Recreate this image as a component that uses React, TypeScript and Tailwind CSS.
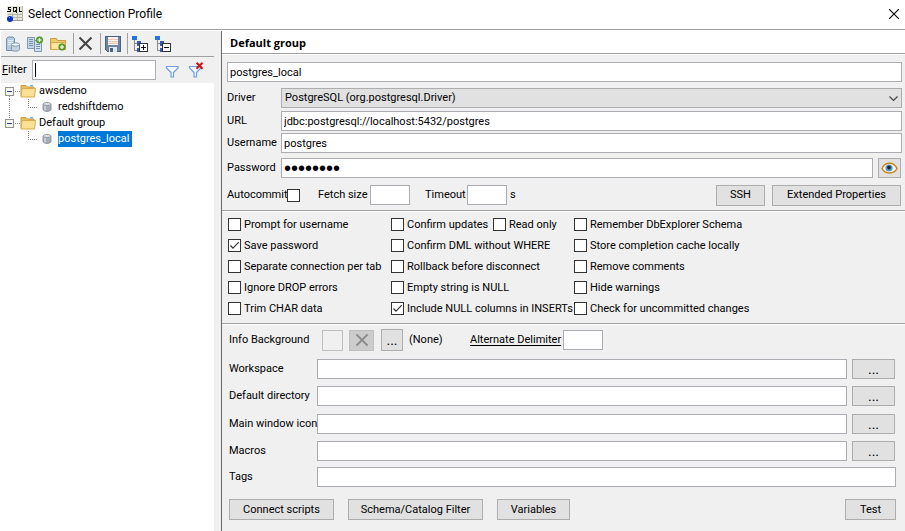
import { useId, type ReactNode } from "react";

const field = "h-5 min-w-0 border border-[#abadb3] bg-white px-0.5 outline-none";
const button = "flex items-center justify-center border border-[#adadad] bg-[#e1e1e1]";

function Check({ label, checked = false }: { label: string; checked?: boolean }) {
  return (
    <label className="flex h-[21px] items-center gap-[3px] whitespace-nowrap">
      <span className="relative h-[13px] w-[13px] shrink-0">
        <input
          type="checkbox"
          defaultChecked={checked}
          className="peer block h-[13px] w-[13px] appearance-none border border-[#333] bg-white"
        />
        <svg viewBox="0 0 13 13" className="pointer-events-none absolute inset-0 hidden h-[13px] w-[13px] peer-checked:block">
          <path d="M2.5 6.5 5 9.2 10.8 3.2" fill="none" stroke="#333" strokeWidth="1.2" />
        </svg>
      </span>
      {label}
    </label>
  );
}

function TopRow({ label, className, children }: { label: string; className: string; children: (id: string) => ReactNode }) {
  const id = useId();
  return (
    <div className={`flex items-center ${className}`}>
      <label htmlFor={id} className="w-[54px] shrink-0">{label}</label>
      {children(id)}
    </div>
  );
}

function PathRow({ label, className, browse = true }: { label: string; className: string; browse?: boolean }) {
  const id = useId();
  return (
    <div className={`flex h-5 items-center ${className}`}>
      <label htmlFor={id} className="w-[88px] shrink-0 whitespace-nowrap">{label}</label>
      <input id={id} type="text" className={`${field} flex-1`} />
      {browse && (
        <button type="button" aria-label={`Browse ${label}`} className={`${button} ml-[5px] mr-px h-5 w-[43px]`}>
          <Dots />
        </button>
      )}
    </div>
  );
}

function Dots() {
  return <span className="text-sm leading-3">...</span>;
}

function Rule() {
  return <div className="h-0.5 border-t border-[#a0a0a0] bg-white" />;
}

function AppIcon() {
  return (
    <svg width="16" height="16" viewBox="0 0 16 16" shapeRendering="crispEdges">
      <path d="M0 0h16v15H0z" fill="#e6e6dc" />
      <path d="M1 8.5h14M1 11.5h14M5.5 7v8M10.5 7v8M15.5 0v15" stroke="#b4b4a8" />
      <path d="M1 14.5h15" stroke="#999" />
      <path d="M4 1.5H1.500v2H3.500v2H0M6.500 1.500h3v4h-3zM8.500 4.500l2 3M12.500 1v4.500H15" fill="none" stroke="#111" />
      <circle cx="3" cy="13" r="3" fill="#0a32c8" shapeRendering="auto" />
      <path d="M2 11h1v1H2z" fill="#7da0ff" />
    </svg>
  );
}

function Cylinder() {
  return (
    <>
      <path d="M6.500 8.500v5c0 2.300 8 2.300 8 0v-5" fill="#c5d3df" stroke="#8299ae" />
      <ellipse cx="10.500" cy="8.500" rx="4" ry="1.700" fill="#edf3f8" stroke="#8299ae" />
    </>
  );
}

function ServerIcon() {
  return (
    <svg width="16" height="16" viewBox="0 0 16 16">
      <path d="M1.500 2.500 3 1h5l1.500 1.500v12h-8z" fill="#b3cbe0" stroke="#6f8fab" />
      <path d="M3 4.500h5M3 6.500h5M3 8.500h3" stroke="#e3eef7" />
      <Cylinder />
    </svg>
  );
}

function PlusBadge({ x, y }: { x: number; y: number }) {
  return (
    <>
      <circle cx={x} cy={y} r="3.300" fill="#5fa530" stroke="#417d22" strokeWidth=".6" />
      <path d={`M${x - 2} ${y}h4M${x} ${y - 2}v4`} stroke="#fff" strokeWidth="1.200" />
    </>
  );
}

function CopyServerIcon() {
  return (
    <svg width="17" height="16" viewBox="0 0 17 16">
      <path d="M.5 1.500h7v11h-7z" fill="#c2d7e8" stroke="#7d9ab3" />
      <path d="M2 3.500h4M2 5.500h4M2 7.500h4M2 9.500h4" stroke="#7795ae" />
      <path d="M7.500 4.500h7v11h-7z" fill="#d3e2ee" stroke="#7d9ab3" />
      <path d="M9 8.500h4M9 10.500h4M9 12.500h4" stroke="#7795ae" />
      <PlusBadge x={12.5} y={4} />
    </svg>
  );
}

function FolderNewIcon() {
  return (
    <svg width="17" height="16" viewBox="0 0 17 16">
      <path d="M.5 13.500v-11h6l1 2h8v9z" fill="#eccb6c" stroke="#c79b3d" />
      <path d="M1 6.500h14.500v7H1z" fill="#fbe49b" stroke="#d3a94c" />
      <PlusBadge x={12} y={11} />
    </svg>
  );
}

function SaveIcon() {
  return (
    <svg width="16" height="16" viewBox="0 0 16 16" shapeRendering="crispEdges">
      <path d="M.5.5h15v15h-13l-2-2z" fill="#6b86a4" stroke="#4c627b" />
      <path d="M3 1h10v8H3z" fill="#fff1ec" />
      <path d="M3 3.500h10M3 5.500h10M3 7.500h10" stroke="#efc5ba" />
      <path d="M4 11h8v5H4z" fill="#dfe6ec" />
      <path d="M5 12h3v4H5z" fill="#4c627b" />
    </svg>
  );
}

function TreeIcon({ expand = false }: { expand?: boolean }) {
  return (
    <svg width="16" height="16" viewBox="0 0 16 16" shapeRendering="crispEdges">
      <path d="M0 0h5v4H0z" fill="#2472e8" />
      <path d="M2.500 4v10.500H5M2.500 7.500H5" fill="none" stroke="#8a8a8a" />
      <path d="M5 5h4v5H5zM5 12h3v4H5z" fill="#3558b8" />
      <path d="M7.500 7.500h8v8h-8z" fill="#fff" stroke="#333" />
      <path d="M9 11.500h5" stroke="#111" />
      {expand && <path d="M11.500 9v5" stroke="#111" />}
    </svg>
  );
}

function FunnelIcon({ clear = false }: { clear?: boolean }) {
  return (
    <svg width="16" height="16" viewBox="0 0 16 16">
      <path d="M1.500 4.500h11.500v1.500L8.500 10.500V15H6v-4.500L1.500 6z" fill="#f1f8ff" stroke="#6f9fdc" strokeWidth="1.200" />
      {clear && <path d="m8.500.8 6 6M14.500.8l-6 6" stroke="#c5161d" strokeWidth="2" />}
    </svg>
  );
}

function CrossIcon({ color = "#444", size = 15 }: { color?: string; size?: number }) {
  return (
    <svg width={size} height={size} viewBox="0 0 15 15">
      <path d="M1.500 1.500l12 12M13.500 1.500l-12 12" stroke={color} strokeWidth="2" />
    </svg>
  );
}

function FolderIcon() {
  return (
    <svg width="16" height="14" viewBox="0 0 16 14">
      <path d="M1 12V1.500h5L7.500 3H14v9z" fill="#e8bd5b" stroke="#c99b3f" />
      <path d="M10 1h3v1.500h-3z" fill="#64b8ef" />
      <path d="M1 13 2 4.500h13.500L14.500 13z" fill="#fbdf93" stroke="#d8ac50" />
    </svg>
  );
}

function DbIcon() {
  return (
    <svg width="10" height="10" viewBox="0 0 10 10">
      <path d="M1 2v5.500c0 2.500 8 2.500 8 0V2z" fill="#a5adb5" stroke="#7c858e" strokeWidth=".8" />
      <path d="M3 4v4.500" stroke="#d3d9de" strokeWidth="1.500" />
      <ellipse cx="5" cy="2" rx="4" ry="1.500" fill="#dbe0e5" stroke="#8b949c" strokeWidth=".8" />
    </svg>
  );
}

function Expander({ down = false, up = false }: { down?: boolean; up?: boolean }) {
  return (
    <svg width="16" height="16" viewBox="0 0 16 16" shapeRendering="crispEdges">
      {down && <path d="M5.500 13v3" stroke="#888" strokeDasharray="1 1" />}
      {up && <path d="M5.500 0v4" stroke="#888" strokeDasharray="1 1" />}
      <path d="M11 8.500h5" stroke="#888" strokeDasharray="1 1" />
      <path d="M1.500 4.500h8v8h-8z" fill="#f8f8f8" stroke="#919191" />
      <path d="M3 8.500h5" stroke="#29499b" />
    </svg>
  );
}

function Branch({ line = false }: { line?: boolean }) {
  return (
    <svg width="38" height="16" viewBox="0 0 38 16" shapeRendering="crispEdges">
      {line && <path d="M5.500 0v16" stroke="#888" strokeDasharray="1 1" />}
      <path d="M24.500 0v8.500H34" fill="none" stroke="#888" strokeDasharray="1 1" />
    </svg>
  );
}

function EyeIcon() {
  return (
    <svg width="17" height="12" viewBox="0 0 17 12">
      <path d="M1 6.500C4-.5 13-.5 16 6.500 13 12.500 4 12.500 1 6.500z" fill="#fff" stroke="#c9851c" strokeWidth="1.500" />
      <circle cx="8" cy="6" r="3.600" fill="#5d9cc9" />
      <circle cx="8" cy="5.500" r="1.900" fill="#102536" />
    </svg>
  );
}

function ToolButton({ label, children }: { label: string; children: ReactNode }) {
  return (
    <button type="button" aria-label={label} className="flex h-5 w-[23px] items-center justify-center">
      {children}
    </button>
  );
}

function Divider() {
  return <div className="ml-[3px] h-[21px] w-px bg-[#a0a0a0]" />;
}

function Sidebar() {
  return (
    <aside className="flex w-[214px] shrink-0 flex-col pl-px">
      <div className="flex h-[26px] items-center border-b border-[#a0a0a0] bg-[#f0f0f0]">
        <ToolButton label="New profile"><ServerIcon /></ToolButton>
        <ToolButton label="Copy profile"><CopyServerIcon /></ToolButton>
        <ToolButton label="New group"><FolderNewIcon /></ToolButton>
        <Divider />
        <ToolButton label="Delete"><CrossIcon /></ToolButton>
        <Divider />
        <ToolButton label="Save"><SaveIcon /></ToolButton>
        <Divider />
        <ToolButton label="Expand all"><TreeIcon expand /></ToolButton>
        <ToolButton label="Collapse all"><TreeIcon /></ToolButton>
      </div>
      <div className="flex h-[26px] items-center bg-[#f0f0f0] pl-px">
        <label htmlFor="filter" className="w-[30px]"><u>F</u>ilter</label>
        <span className="relative">
          <input id="filter" type="text" className={`${field} block w-[124px]`} />
          <span className="absolute left-[3px] top-[3px] h-[14px] w-px bg-black" />
        </span>
        <button type="button" aria-label="Apply filter" className="ml-[9px]"><FunnelIcon /></button>
        <button type="button" aria-label="Clear filter" className="ml-[7px]"><FunnelIcon clear /></button>
      </div>
      <ul className="flex-1 pl-[3px]">
        <li className="flex h-4 items-center"><Expander down /><FolderIcon /><span className="ml-[3px]">awsdemo</span></li>
        <li className="flex h-4 items-center"><Branch line /><DbIcon /><span className="ml-[6px]">redshiftdemo</span></li>
        <li className="flex h-4 items-center"><Expander up /><FolderIcon /><span className="ml-[3px]">Default group</span></li>
        <li className="flex h-4 items-center"><Branch /><DbIcon /><span className="ml-[6px] h-4 bg-[#0078d7] pr-[3px] text-white">postgres_local</span></li>
      </ul>
    </aside>
  );
}

export default function App() {
  return (
    <div className="flex min-h-screen flex-col bg-white font-['Roboto','Noto_Sans',sans-serif] text-[11px] leading-4 text-black">
      <header className="flex h-[30px] items-center border-b border-[#a0a0a0] pb-0.5 pl-[7px] pr-[6px] text-[12px]">
        <AppIcon />
        <h1 className="ml-[5px] flex-1">Select Connection Profile</h1>
        <button type="button" aria-label="Close">
          <svg width="10" height="10" viewBox="0 0 10 10"><path d="M0 0l10 10M10 0 0 10" stroke="#000" strokeWidth="1.100" /></svg>
        </button>
      </header>
      <div className="flex flex-1 pt-px">
        <Sidebar />
        <div className="w-2 shrink-0 border-r border-[#696969] bg-[#f0f0f0]" />
        <main className="flex min-w-0 flex-1 flex-col bg-[#f0f0f0]">
          <h2 className="h-[22px] bg-white pl-2 pt-1 font-['Open_Sans',sans-serif] font-bold">Default group</h2>
          <Rule />
          <section className="flex flex-col pl-[5px] pr-[3px] pt-[7px]">
            <input aria-label="Profile name" type="text" defaultValue="postgres_local" className={field} />
            <TopRow label="Driver" className="mt-[6px] h-5">
              {(id) => (
                <span className="relative flex flex-1">
                  <select id={id} className="h-5 w-full appearance-none border border-[#adadad] bg-[#e1e1e1] pl-[3px]">
                    <option>PostgreSQL (org.postgresql.Driver)</option>
                  </select>
                  <svg viewBox="0 0 9 6" className="pointer-events-none absolute right-[4px] top-[8px] h-[6px] w-[9px]">
                    <path d="M.5.5l4 4 4-4" fill="none" stroke="#444" strokeWidth="1.200" />
                  </svg>
                </span>
              )}
            </TopRow>
            <TopRow label="URL" className="mt-[3px] h-5">
              {(id) => <input id={id} type="text" defaultValue="jdbc:postgresql://localhost:5432/postgres" className={`${field} flex-1`} />}
            </TopRow>
            <TopRow label="Username" className="mt-[2px] h-5">
              {(id) => <input id={id} type="text" defaultValue="postgres" className={`${field} flex-1`} />}
            </TopRow>
            <TopRow label="Password" className="mt-[5px] h-5">
              {(id) => (
                <>
                  <input id={id} type="password" defaultValue="password" className={`${field} flex-1 font-['Liberation_Sans',sans-serif] text-xl leading-4`} />
                  <button type="button" aria-label="Show password" className={`${button} ml-[5px] mr-px h-5 w-[23px]`}>
                    <EyeIcon />
                  </button>
                </>
              )}
            </TopRow>
            <div className="mb-1 mt-[6px] flex h-[22px] items-center pr-px">
              <label htmlFor="autocommit" className="w-[60px]">Autocommit</label>
              <input id="autocommit" type="checkbox" className="h-[13px] w-[13px] appearance-none border border-[#333] bg-white" />
              <label htmlFor="fetch" className="ml-[18px] w-[52px] whitespace-nowrap">Fetch size</label>
              <input id="fetch" type="text" className={`${field} w-10`} />
              <label htmlFor="timeout" className="ml-[15px] w-[42px]">Timeout</label>
              <input id="timeout" type="text" className={`${field} w-10`} />
              <span className="ml-[3px] flex-1">s</span>
              <button type="button" className={`${button} h-[21px] w-[49px]`}>SSH</button>
              <button type="button" className={`${button} ml-[7px] h-[21px] w-[129px]`}>Extended Properties</button>
            </div>
          </section>
          <Rule />
          <section className="flex pb-1 pl-[6px] pt-0.5">
            <div className="w-[163px]">
              <Check label="Prompt for username" />
              <Check label="Save password" checked />
              <Check label="Separate connection per tab" />
              <Check label="Ignore DROP errors" />
              <Check label="Trim CHAR data" />
            </div>
            <div className="w-[183px]">
              <div className="flex">
                <div className="w-[102px]"><Check label="Confirm updates" /></div>
                <Check label="Read only" />
              </div>
              <Check label="Confirm DML without WHERE" />
              <Check label="Rollback before disconnect" />
              <Check label="Empty string is NULL" />
              <Check label="Include NULL columns in INSERTs" checked />
            </div>
            <div>
              <Check label="Remember DbExplorer Schema" />
              <Check label="Store completion cache locally" />
              <Check label="Remove comments" />
              <Check label="Hide warnings" />
              <Check label="Check for uncommitted changes" />
            </div>
          </section>
          <Rule />
          <section className="flex flex-col pl-[7px] pr-[9px] pt-1">
            <div className="flex h-[22px] items-center">
              <span className="w-[93px] whitespace-nowrap">Info Background</span>
              <span className="h-[21px] w-[21px] border border-[#bfbfbf]" />
              <button type="button" disabled aria-label="Clear color" className="ml-[6px] flex h-[21px] w-[25px] items-center justify-center border border-[#bfbfbf] bg-[#ccc]">
                <CrossIcon color="#888" size={14} />
              </button>
              <button type="button" aria-label="Choose color" className={`${button} ml-[7px] h-[22px] w-[22px]`}><Dots /></button>
              <span className="ml-[6px] w-[61px]">(None)</span>
              <label htmlFor="delimiter" className="w-[93px] whitespace-nowrap underline underline-offset-2">Alternate Delimiter</label>
              <input id="delimiter" type="text" className={`${field} w-10`} />
            </div>
            <PathRow label="Workspace" className="mt-2" />
            <PathRow label="Default directory" className="mt-[7px]" />
            <PathRow label="Main window icon" className="mt-2" />
            <PathRow label="Macros" className="mt-[7px]" />
            <PathRow label="Tags" className="mt-[6px]" browse={false} />
            <div className="mt-3 flex">
              <button type="button" className={`${button} h-[21px] w-[105px]`}>Connect scripts</button>
              <button type="button" className={`${button} ml-[14px] h-[21px] w-[135px]`}>Schema/Catalog Filter</button>
              <button type="button" className={`${button} ml-[14px] h-[21px] w-[73px]`}>Variables</button>
              <button type="button" className={`${button} ml-auto h-[21px] w-[51px]`}>Test</button>
            </div>
          </section>
        </main>
      </div>
    </div>
  );
}
